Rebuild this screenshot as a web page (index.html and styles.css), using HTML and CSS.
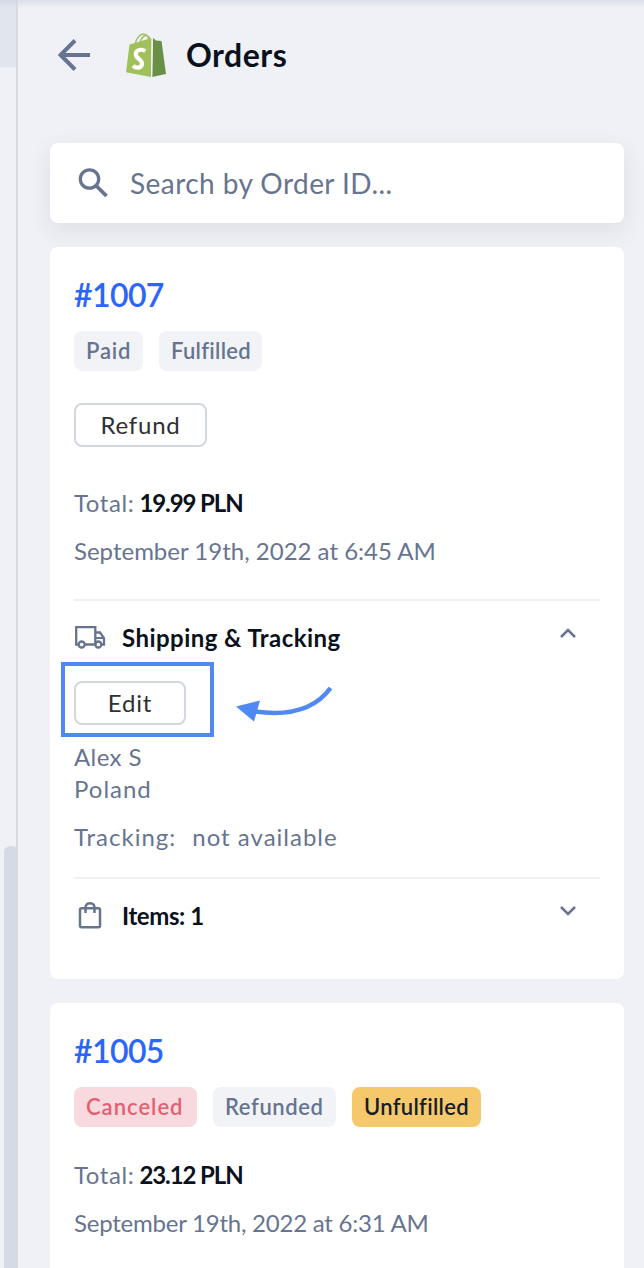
FILE: index.html
```html
<!DOCTYPE html>
<html lang="en">
<head>
<meta charset="utf-8">
<title>Orders</title>
<link rel="stylesheet" href="styles.css">
</head>
<body>
<div class="app">
  <aside class="rail"><div class="rail-top"></div><div class="scroll-thumb"></div></aside>
  <main class="panel">
    <header class="header">
      <svg class="back" width="32" height="32" viewBox="0 0 32 32"><path d="M32 16H3M17 1.500 2.500 16 17 30.500" fill="none" stroke="#67748f" stroke-width="4"/></svg>
      <svg class="shop" width="40" height="44" viewBox="0 0 40 44">
        <path d="M9 12C10 5 14 1 17.500 1S23 5 23 10M14 10C15 5 18 2 20.500 2.500S24 6 24 9" fill="none" stroke="#9fc05a" stroke-width="1.500"/>
        <path d="M3.500 11.500 25.500 5 25 44 0 39.300Z" fill="#9fc05a"/>
        <path d="M27 5 30 7.500 35.500 8 40 41 26 44Z" fill="#6a9048"/>
        <path d="M26.300 5 25.700 44" stroke="#eff1f6" stroke-width="1.300"/>
        <path d="M19.300 18C15 15.500 9.500 17 9.800 21.500 10 25.500 16.500 26.500 16 31 15.500 35.500 10 35.500 7 32.700" fill="none" stroke="#fff" stroke-width="4.200"/>
      </svg>
      <h1 class="title">Orders</h1>
    </header>
    <div class="search">
      <svg width="30" height="30" viewBox="0 0 30 30"><circle cx="11.500" cy="11" r="9.200" fill="none" stroke="#67748f" stroke-width="3.200"/><path d="M18 17.500 28.500 28" stroke="#67748f" stroke-width="3.800"/></svg>
      <span>Search by Order ID...</span>
    </div>
    <section class="card">
      <h2 class="order">#1007</h2>
      <div class="badges"><span class="badge paid">Paid</span><span class="badge fulfilled">Fulfilled</span></div>
      <button class="button refund">Refund</button>
      <p class="line total"><span class="wide">Total:</span><b>19.99 PLN</b></p>
      <p class="line date">September 19th, 2022 at 6:45 AM</p>
      <div class="section">
        <div class="section-head">
          <svg class="icon" width="32" height="24" viewBox="0 0 32 24" fill="none" stroke="#67748f" stroke-width="2.300"><path d="M4 19.500H2.200V2.200H21.300V19.500H11M21.300 7.500H26L30 13V19.500H27.500M21 19.500H18"/><path d="M22 13H30" stroke-width="2"/><circle cx="7.700" cy="19.500" r="3"/><circle cx="24.300" cy="19.500" r="3"/></svg>
          <h3>Shipping &amp; Tracking</h3>
          <svg class="chevron" width="16" height="10" viewBox="0 0 16 10"><path d="M1 9 8 2 15 9" fill="none" stroke="#67748f" stroke-width="2.500"/></svg>
        </div>
        <div class="edit-row">
          <button class="button edit">Edit</button>
          <div class="highlight"></div>
          <svg class="pointer" width="100" height="40" viewBox="0 0 100 40"><path d="M95.500 3Q73 34 20 26.500" fill="none" stroke="#5189f4" stroke-width="4.500"/><path d="M1 21.500 25 15.500 19 36.500Z" fill="#5189f4"/></svg>
        </div>
        <p class="line name">Alex S</p>
        <p class="line country">Poland</p>
        <p class="line tracking"><span>Tracking:</span><span>not available</span></p>
      </div>
      <div class="section items">
        <div class="section-head">
          <svg class="icon" width="32" height="28" viewBox="0 0 32 28" fill="none" stroke="#67748f" stroke-width="2.500"><rect x="6" y="7.300" width="20" height="19" rx="1.500"/><path d="M11.500 12V6.500C11.500 .7 20.500 .7 20.500 6.500V12"/></svg>
          <h3>Items: 1</h3>
          <svg class="chevron" width="16" height="10" viewBox="0 0 16 10"><path d="M1 1 8 8 15 1" fill="none" stroke="#67748f" stroke-width="2.500"/></svg>
        </div>
      </div>
    </section>
    <section class="card">
      <h2 class="order">#1005</h2>
      <div class="badges"><span class="badge canceled">Canceled</span><span class="badge refunded">Refunded</span><span class="badge unfulfilled">Unfulfilled</span></div>
      <p class="line total second"><span class="wide">Total:</span><b>23.12 PLN</b></p>
      <p class="line date early">September 19th, 2022 at 6:31 AM</p>
    </section>
  </main>
</div>
</body>
</html>
```
FILE: styles.css
```css
* { box-sizing: border-box; }
body { margin: 0; background: #eff1f6; color: #67748f; font: 24px/32px Lato, "Open Sans", sans-serif; }
h1, h2, h3, p { margin: 0; }
.app { display: flex; height: 1268px; overflow: hidden; background: linear-gradient(#dcdee8, #eff1f6 8px); }
.rail { width: 18px; flex: none; display: flex; flex-direction: column; justify-content: space-between; border-right: 2px solid #d4dbe4; }
.rail-top { height: 67px; background: linear-gradient(#d4d9e4, #e1e6ee 8px); }
.scroll-thumb { width: 14px; height: 422px; margin-left: 4px; background: #d4dbe4; border-radius: 6px 6px 0 0; }
.panel { flex: 1; padding: 0 20px 0 32px; }
.header { display: flex; align-items: center; height: 110px; padding-left: 8px; }
.shop { margin-left: 36px; }
.title { margin-left: 20px; font-size: 32px; font-weight: 700; line-height: 48px; color: #0a111c; letter-spacing: .5px; }
.search { display: flex; align-items: center; gap: 22px; height: 80px; margin: 33px 0 24px; padding-left: 28px; background: #fff; border-radius: 8px; box-shadow: 0 8px 24px rgba(40, 45, 80, .09); font-size: 28px; letter-spacing: .45px; }
.card { background: #fff; border-radius: 8px; padding: 24px; margin-bottom: 24px; height: 732px; }
.order { font-size: 32px; line-height: 48px; font-weight: 600; color: #2b65fa; letter-spacing: -.6px; }
.badges { display: flex; gap: 16px; margin-top: 12px; }
.badge { height: 40px; line-height: 40px; padding-left: 12px; border-radius: 8px; background: #f2f3f6; font-size: 22px; font-weight: 600; white-space: nowrap; }
.paid { width: 69px; letter-spacing: .8px; }
.fulfilled { width: 103px; letter-spacing: .3px; }
.refunded { width: 123px; letter-spacing: .6px; }
.canceled { width: 123px; background: #f7d9de; color: #e35f72; letter-spacing: 1px; }
.unfulfilled { width: 129px; background: #f5c96b; color: #151c2c; letter-spacing: .3px; }
.button { display: block; height: 44px; padding: 0; border: 2px solid #d1d8df; border-radius: 8px; background: #fff; color: #303030; font: 24px/40px Lato, "Open Sans", sans-serif; letter-spacing: .8px; }
.refund { width: 133px; margin-top: 32px; }
.edit { width: 112px; }
.line { height: 32px; line-height: 30px; white-space: nowrap; }
.total { display: flex; gap: 5px; margin-top: 41px; }
.total.second { margin-top: 33px; }
.total b { color: #0a111c; font-weight: 700; letter-spacing: -1.1px; }
.wide { letter-spacing: .6px; }
.date { margin-top: 16px; }
.early { letter-spacing: -.23px; }
.name { letter-spacing: .4px; }
.country { letter-spacing: 1px; }
.section { margin-top: 31px; border-top: 2px solid #eff1f5; padding-top: 21px; }
.section-head { display: flex; align-items: center; height: 32px; }
.section-head h3 { margin-left: 16px; font-size: 24px; line-height: 32px; font-weight: 700; color: #0a111c; letter-spacing: .45px; white-space: nowrap; }
.icon { margin-top: -2px; }
.chevron { margin: -10px 24px 0 auto; }
.edit-row { position: relative; margin: 27px 0 17px; }
.highlight { position: absolute; left: -13px; top: -19px; width: 153px; height: 75px; border: 4px solid #5189f4; }
.pointer { position: absolute; left: 161px; top: 4px; }
.tracking { display: flex; gap: 16px; margin-top: 16px; letter-spacing: 1px; }
.items { margin-top: 23px; }
.items h3 { letter-spacing: -.4px; }
```
